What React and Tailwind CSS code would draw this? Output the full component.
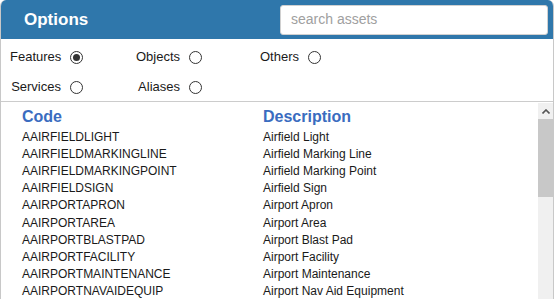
import React from 'react';

const rows = [
  ['AAIRFIELDLIGHT', 'Airfield Light'],
  ['AAIRFIELDMARKINGLINE', 'Airfield Marking Line'],
  ['AAIRFIELDMARKINGPOINT', 'Airfield Marking Point'],
  ['AAIRFIELDSIGN', 'Airfield Sign'],
  ['AAIRPORTAPRON', 'Airport Apron'],
  ['AAIRPORTAREA', 'Airport Area'],
  ['AAIRPORTBLASTPAD', 'Airport Blast Pad'],
  ['AAIRPORTFACILITY', 'Airport Facility'],
  ['AAIRPORTMAINTENANCE', 'Airport Maintenance'],
  ['AAIRPORTNAVAIDEQUIP', 'Airport Nav Aid Equipment'],
];

const Radio = ({ label, checked }) => (
  <div className="flex items-center">
    <span className="w-[51px] text-right text-[13px] text-[#1a1a1a]">{label}</span>
    <span className="ml-[9px] w-[13px] h-[13px] rounded-full border border-[#333] bg-white flex items-center justify-center">
      {checked && <span className="w-[7px] h-[7px] rounded-full bg-[#333]" />}
    </span>
  </div>
);

export default function App() {
  return (
    <div className="w-[555px] h-[299px] overflow-hidden bg-white" style={{ fontFamily: '"Liberation Sans", Arial, sans-serif' }}>
      <div className="w-[554px] h-full flex flex-col border-l border-r border-[#c8c8c8] rounded-t-[6px] overflow-hidden">
        <div className="h-[39px] shrink-0 bg-[#2f77ab] flex items-center justify-between pl-[23px] pr-[5px]">
          <span className="text-white font-bold text-[17px]">Options</span>
          <div className="w-[268px] h-[30px] bg-white rounded-[3px] border border-[#d0d0d0] flex items-center pl-[10px]">
            <span className="text-[14px] text-[#a0a0a0]">search assets</span>
          </div>
        </div>
        <div className="shrink-0 pl-[9px] pt-[3px] h-[63px] border-b border-[#cccccc]">
          <div className="grid grid-cols-[119px_119px_119px] h-[30px] items-center">
            <Radio label="Features" checked />
            <Radio label="Objects" />
            <Radio label="Others" />
          </div>
          <div className="grid grid-cols-[119px_119px_119px] h-[30px] items-center">
            <Radio label="Services" />
            <Radio label="Aliases" />
          </div>
        </div>
        <div className="flex-1 flex min-h-0">
          <div className="flex-1 pl-[21px] pt-[4px] overflow-hidden">
            <div className="flex h-[22px] items-center text-[16px] font-bold text-[#3a6cc0]">
              <span className="w-[241px]">Code</span>
              <span>Description</span>
            </div>
            {rows.map(([code, desc]) => (
              <div key={code} className="flex h-[17.2px] items-center text-[12px] text-[#1a1a1a]">
                <span className="w-[241px]">{code}</span>
                <span>{desc}</span>
              </div>
            ))}
          </div>
          <div className="w-[15px] shrink-0 bg-[#f0f0f0] flex flex-col mt-[1px]">
            <div className="h-[16px] flex items-center justify-center">
              <svg width="8" height="5" viewBox="0 0 8 5">
                <path d="M0.5 4.5 L4 1 L7.5 4.5" fill="none" stroke="#555" strokeWidth="1.6" />
              </svg>
            </div>
            <div className="h-[78px] bg-[#c8c8c8]" />
          </div>
        </div>
      </div>
    </div>
  );
}
